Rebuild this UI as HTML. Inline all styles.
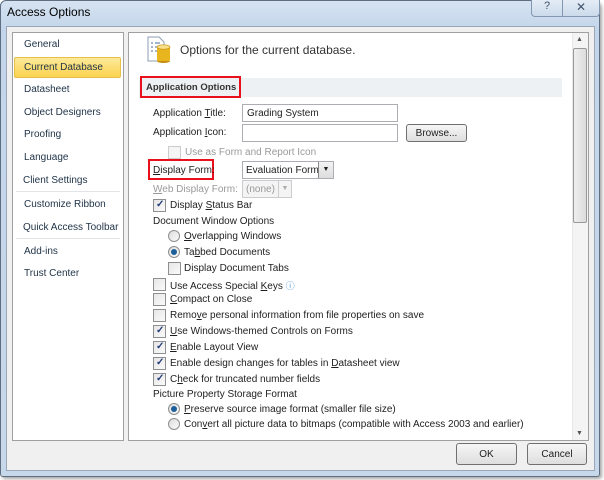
<!DOCTYPE html>
<html><head><style>
*{margin:0;padding:0;box-sizing:border-box}
body{width:604px;height:480px;background:#fff;font-family:"Liberation Sans",sans-serif;font-size:10px;color:#1e1e1e;position:relative;overflow:hidden}
.a{position:absolute;white-space:nowrap}
.frame{left:0;top:0;width:600px;height:477px;background:linear-gradient(#d6e3f1,#c3d5ea 30px,#c8d8eb);border:1px solid #5f6e80;border-radius:6px 6px 3px 3px;box-shadow:2px 2px 3px rgba(0,0,0,.35)}
.bodyp{left:6px;top:26px;width:589px;height:445px;background:#f0f0f0;border:1px solid #9aa7b6}
.panel{background:#fff;border:1px solid #a0a0a0}
.nav{left:24px;color:#1e3246}
.cb{width:13px;height:13px;border:1px solid #8e8f8f;background:linear-gradient(135deg,#e6e6e6,#fafafa)}
.cb.k::after{content:"✓";position:absolute;left:2px;top:-1px;font-size:10px;color:#243e78;font-weight:bold}
.rd{width:12px;height:12px;border:1px solid #8e8f8f;border-radius:50%;background:linear-gradient(135deg,#ddd,#fbfbfb)}
.rd.k::after{content:"";position:absolute;left:2px;top:2px;width:6px;height:6px;border-radius:50%;background:#1d5f9a}
.tb{height:18px;border:1px solid #abadb3;background:#fff;padding:3px 4px}
.btn{border:1px solid #707070;border-radius:3px;background:linear-gradient(#f6f6f6,#dedede);text-align:center}
u{text-decoration:underline}
.red{border:2px solid #e8101a}
.g{color:#9a9a9a}
</style></head><body>
<div class="a frame"></div>
<div class="a" style="left:7px;top:5px;font-size:12px;color:#000">Access Options</div>
<div class="a" style="left:531px;top:0;width:32px;height:17px;border:1px solid #8297b0;border-top:none;border-radius:0 0 0 4px;background:linear-gradient(#e4edf6,#cbdaea);text-align:center;font-size:11px;color:#41546b">?</div>
<div class="a" style="left:562px;top:0;width:38px;height:17px;border:1px solid #8297b0;border-top:none;border-radius:0 0 4px 0;background:linear-gradient(#e4edf6,#cbdaea);text-align:center;font-size:12px;color:#41546b">✕</div>
<div class="a bodyp"></div>
<div class="a panel" style="left:12px;top:32px;width:112px;height:409px"></div>
<div class="a panel" style="left:128px;top:32px;width:461px;height:409px"></div>
<div class="a" style="left:14px;top:57px;width:107px;height:21px;background:linear-gradient(#fde99a,#fbd34f);border:1px solid #e5c04a;border-radius:2px"></div>
<div class="a nav" style="top:39px">General</div>
<div class="a nav" style="top:62px">Current Database</div>
<div class="a nav" style="top:84px">Datasheet</div>
<div class="a nav" style="top:107px">Object Designers</div>
<div class="a nav" style="top:129px">Proofing</div>
<div class="a nav" style="top:152px">Language</div>
<div class="a nav" style="left:23px;top:175px">Client Settings</div>
<div class="a" style="left:16px;top:191px;width:104px;height:1px;background:#e2e4e7"></div>
<div class="a nav" style="top:199px">Customize Ribbon</div>
<div class="a nav" style="left:23px;top:222px">Quick Access Toolbar</div>
<div class="a" style="left:16px;top:238px;width:104px;height:1px;background:#e2e4e7"></div>
<div class="a nav" style="top:246px">Add-ins</div>
<div class="a nav" style="top:268px">Trust Center</div>
<div class="a" style="left:572px;top:33px;width:16px;height:407px;background:#f4f4f4;border-left:1px solid #e8e8e8"></div>
<div class="a" style="left:576px;top:36px;font-size:7px;color:#555">▲</div>
<div class="a" style="left:576px;top:430px;font-size:7px;color:#555">▼</div>
<div class="a" style="left:573px;top:48px;width:14px;height:175px;border:1px solid #999;border-radius:2px;background:linear-gradient(90deg,#eee,#dcdcdc)"></div>
<svg class="a" style="left:146px;top:36px" width="26" height="27" viewBox="0 0 26 27"><path d="M2 1h11l5 5v19H2z" fill="#fff" stroke="#8e9fb3"/><path d="M5 7h2M5 11h2M5 15h2M9 7h5M9 11h5M9 15h5" stroke="#4a6e9a"/><rect x="11" y="11" width="13" height="14" rx="1" fill="#e8b51f"/><ellipse cx="17.5" cy="11" rx="6.5" ry="2.2" fill="#f8e08a" stroke="#c48e10" stroke-width=".6"/><path d="M11 25a6.5 2 0 0 0 13 0" fill="#c48e10"/></svg>
<div class="a" style="left:180px;top:43px;font-size:12px;color:#333">Options for the current database.</div>
<div class="a" style="left:139px;top:78px;width:423px;height:19px;background:#eef1f3"></div>
<div class="a red" style="left:140px;top:76px;width:101px;height:22px"></div>
<div class="a" style="left:146px;top:82px;font-weight:bold;font-size:9.5px;color:#333">Application Options</div>
<div class="a" style="left:153px;top:108px">Application <u>T</u>itle:</div>
<div class="a tb" style="left:242px;top:104px;width:156px">Grading System</div>
<div class="a" style="left:153px;top:127px">Application <u>I</u>con:</div>
<div class="a tb" style="left:242px;top:124px;width:156px"></div>
<div class="a btn" style="left:406px;top:124px;width:61px;height:18px;padding-top:3px">Browse...</div>
<div class="a cb" style="left:168px;top:146px;border-color:#ccc;background:#f5f5f5"></div>
<div class="a g" style="left:185px;top:147px">Use as Form and Report Icon</div>
<div class="a red" style="left:148px;top:159px;width:66px;height:21px"></div>
<div class="a" style="left:153px;top:165px"><u>D</u>isplay Form:</div>
<div class="a tb" style="left:242px;top:161px;width:92px;padding-left:3px">Evaluation Form</div>
<div class="a" style="left:318px;top:162px;width:15px;height:16px;border-left:1px solid #888;background:linear-gradient(#f3f3f3,#ddd);font-size:7px;text-align:center;padding-top:4px">▼</div>
<div class="a g" style="left:153px;top:184px"><u>W</u>eb Display Form:</div>
<div class="a" style="left:242px;top:180px;width:50px;height:18px;border:1px solid #ccc;background:#f4f4f4;color:#999;padding:3px 3px">(none)</div>
<div class="a" style="left:278px;top:181px;width:13px;height:16px;border-left:1px solid #ccc;font-size:7px;color:#aaa;text-align:center;padding-top:4px">▼</div>
<div class="a cb k" style="left:153px;top:199px"></div><div class="a" style="left:170px;top:200px">Display <u>S</u>tatus Bar</div>
<div class="a" style="left:153px;top:216px">Document Window Options</div>
<div class="a rd" style="left:168px;top:230px"></div><div class="a" style="left:184px;top:231px"><u>O</u>verlapping Windows</div>
<div class="a rd k" style="left:168px;top:246px"></div><div class="a" style="left:184px;top:247px">Ta<u>b</u>bed Documents</div>
<div class="a cb" style="left:168px;top:262px"></div><div class="a" style="left:184px;top:263px">Display Document Tabs</div>
<div class="a cb" style="left:153px;top:278px"></div><div class="a" style="left:170px;top:279px">Use Access Special <u>K</u>eys <span style="color:#4a90d9;font-size:9px">ⓘ</span></div>
<div class="a cb" style="left:153px;top:293px"></div><div class="a" style="left:170px;top:294px"><u>C</u>ompact on Close</div>
<div class="a cb" style="left:153px;top:309px"></div><div class="a" style="left:170px;top:310px">Remo<u>v</u>e personal information from file properties on save</div>
<div class="a cb k" style="left:153px;top:325px"></div><div class="a" style="left:170px;top:326px"><u>U</u>se Windows-themed Controls on Forms</div>
<div class="a cb k" style="left:153px;top:341px"></div><div class="a" style="left:170px;top:342px"><u>E</u>nable Layout View</div>
<div class="a cb k" style="left:153px;top:357px"></div><div class="a" style="left:170px;top:358px">Enable design changes for tables in <u>D</u>atasheet view</div>
<div class="a cb k" style="left:153px;top:373px"></div><div class="a" style="left:170px;top:374px">C<u>h</u>eck for truncated number fields</div>
<div class="a" style="left:153px;top:389px">Picture Property Storage Format</div>
<div class="a rd k" style="left:168px;top:403px"></div><div class="a" style="left:184px;top:404px"><u>P</u>reserve source image format (smaller file size)</div>
<div class="a rd" style="left:168px;top:418px"></div><div class="a" style="left:184px;top:419px">Con<u>v</u>ert all picture data to bitmaps (compatible with Access 2003 and earlier)</div>
<div class="a btn" style="left:456px;top:443px;width:61px;height:22px;padding-top:5px">OK</div>
<div class="a btn" style="left:527px;top:443px;width:60px;height:22px;padding-top:5px">Cancel</div>
</body></html>
